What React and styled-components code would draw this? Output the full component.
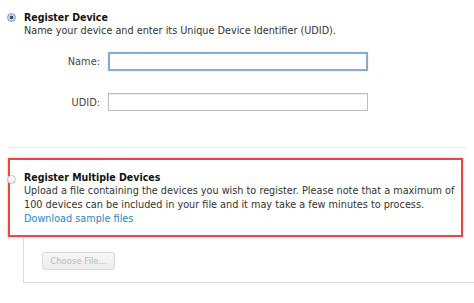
import React from "react";
import styled, { createGlobalStyle } from "styled-components";

const Global = createGlobalStyle`
  html, body { margin: 0; padding: 0; background: #fff; }
  body { font-family: "DejaVu Sans", "Noto Sans", sans-serif; color: #333; }
`;

const Page = styled.div`
  width: 474px;
  height: 303px;
  overflow: hidden;
  display: flex;
  flex-direction: column;
`;

const Section = styled.div`
  display: flex;
  align-items: flex-start;
  padding: 10px 0 0 7px;
`;

const Radio = styled.span`
  flex: none;
  width: 9px;
  height: 9px;
  border-radius: 50%;
  box-sizing: border-box;
  margin-top: ${(p) => p.$top}px;
  margin-left: ${(p) => p.$left || 0}px;
  position: relative;
  border: 1px solid ${(p) => (p.$checked ? "#7d9cc4" : "#c4c4c4")};
  background: ${(p) =>
    p.$checked
      ? "radial-gradient(circle at 50% 50%, #3b4f6a 0 1.6px, #cfe0f4 2.2px, #a9c6ea 100%)"
      : "linear-gradient(#fdfdfd, #ececec)"};
  z-index: 2;
`;

const Body = styled.div`
  margin-left: ${(p) => p.$gap}px;
  display: flex;
  flex-direction: column;
  flex: 1;
`;

const Title = styled.div`
  font-family: "DejaVu Sans Condensed", "DejaVu Sans", sans-serif;
  font-stretch: condensed;
  font-size: 10.5px;
  font-weight: bold;
  color: #111;
  line-height: 14px;
`;

const Text = styled.div`
  font-size: 9.7px;
  line-height: 14px;
  color: #333;
  white-space: nowrap;
`;

const Link = styled.a`
  font-size: 9.7px;
  line-height: 14px;
  color: #2b88c6;
  text-decoration: none;
`;

const Form = styled.div`
  display: flex;
  flex-direction: column;
  gap: 22px;
  margin-top: 14px;
`;

const Row = styled.div`
  display: flex;
  align-items: center;
`;

const Label = styled.label`
  width: 76px;
  text-align: right;
  font-size: 9.8px;
  color: #444;
  margin-right: 8px;
`;

const Input = styled.div`
  width: 260px;
  height: ${(p) => (p.$focus ? 19 : 18)}px;
  box-sizing: border-box;
  background: #fff;
  border: ${(p) => (p.$focus ? "2px solid #88abd6" : "1px solid #bdbdbd")};
  box-shadow: ${(p) => (p.$focus ? "0 0 1px #9fc0e6" : "inset 0 1px 1px rgba(0,0,0,0.08)")};
`;

const Divider = styled.div`
  height: 1px;
  background: #e8ecef;
  margin: 36px 8px 0 8px;
`;

const Boxed = styled.div`
  margin: 10px 0 0 8px;
  width: 455px;
  box-sizing: border-box;
  border: 2px solid #e34a40;
  box-shadow: 0 0 2px rgba(227, 74, 64, 0.5);
  display: flex;
  align-items: flex-start;
  padding: 10px 0 9px 0;
  position: relative;
  z-index: 1;
  background: #fff;
`;

const Panel = styled.div`
  margin-left: 23px;
  width: 460px;
  height: 46px;
  box-sizing: border-box;
  border: 1px solid #dcdcdc;
  border-top: none;
  display: flex;
  align-items: flex-start;
  padding: 15px 0 0 18px;
`;

const FileButton = styled.button`
  width: 73px;
  height: 18px;
  border: 1px solid #dadada;
  border-radius: 3px;
  background: linear-gradient(#f7f7f7, #ececec);
  color: #b8b8b8;
  font-family: "DejaVu Sans", sans-serif;
  font-size: 8.5px;
  padding: 0;
`;

export default function App() {
  return (
    <Page>
      <Global />
      <Section>
        <Radio $checked $top={3} />
        <Body $gap={8}>
          <Title>Register Device</Title>
          <Text>Name your device and enter its Unique Device Identifier (UDID).</Text>
          <Form>
            <Row>
              <Label>Name:</Label>
              <Input $focus />
            </Row>
            <Row>
              <Label>UDID:</Label>
              <Input />
            </Row>
          </Form>
        </Body>
      </Section>
      <Divider />
      <Boxed>
        <Radio $top={5} $left={-3} />
        <Body $gap={8}>
          <Title>Register Multiple Devices</Title>
          <Text>Upload a file containing the devices you wish to register. Please note that a maximum of</Text>
          <Text>100 devices can be included in your file and it may take a few minutes to process.</Text>
          <Link href="#">Download sample files</Link>
        </Body>
      </Boxed>
      <Panel>
        <FileButton disabled>Choose File...</FileButton>
      </Panel>
    </Page>
  );
}
